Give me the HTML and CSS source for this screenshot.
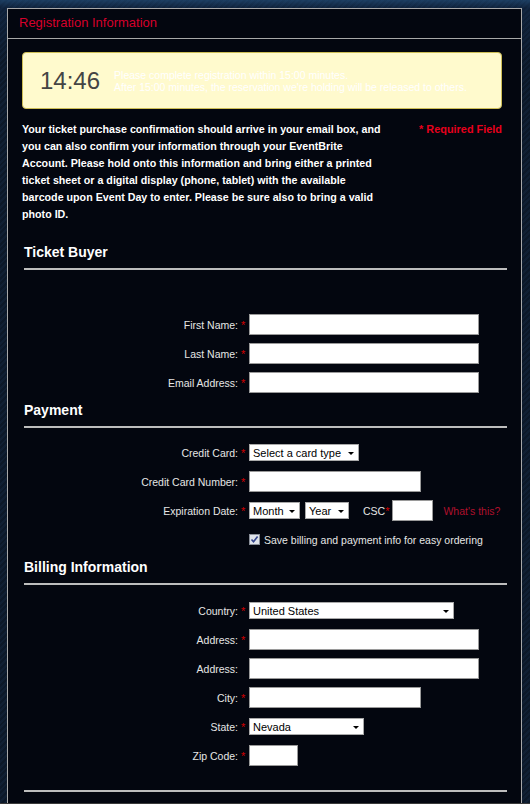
FILE: index.html
```html
<!DOCTYPE html>
<html lang="en">
<head>
<meta charset="utf-8">
<title>Registration Information</title>
<link rel="stylesheet" href="styles.css">
</head>
<body>
<div class="page">
  <div class="panel">
    <div class="panel-header">Registration Information</div>
    <div class="panel-body">
      <div class="timer">
        <div class="timer-clock">14:46</div>
        <div class="timer-msg">Please complete registration within 15:00 minutes.<br>After 15:00 minutes, the reservation we're holding will be released to others.</div>
      </div>

      <div class="intro">
        <p class="intro-text">Your ticket purchase confirmation should arrive in your email box, and<br>you can also confirm your information through your EventBrite<br>Account. Please hold onto this information and bring either a printed<br>ticket sheet or a digital display (phone, tablet) with the available<br>barcode upon Event Day to enter. Please be sure also to bring a valid<br>photo ID.</p>
        <div class="required-note">* Required Field</div>
      </div>

      <section class="section section-first">
        <h2 class="section-title">Ticket Buyer</h2>
        <div class="fields fields-buyer">
          <div class="row"><label class="label">First Name:</label><span class="req">*</span><div class="control"><input class="input w-full" type="text"></div></div>
          <div class="row"><label class="label">Last Name:</label><span class="req">*</span><div class="control"><input class="input w-full" type="text"></div></div>
          <div class="row"><label class="label">Email Address:</label><span class="req">*</span><div class="control"><input class="input w-full" type="text"></div></div>
        </div>
      </section>

      <section class="section">
        <h2 class="section-title">Payment</h2>
        <div class="fields fields-payment">
          <div class="row"><label class="label">Credit Card:</label><span class="req">*</span><div class="control"><div class="select w-card"><span>Select a card type</span><span class="caret"></span></div></div></div>
          <div class="row"><label class="label">Credit Card Number:</label><span class="req">*</span><div class="control"><input class="input w-mid" type="text"></div></div>
          <div class="row"><label class="label">Expiration Date:</label><span class="req">*</span>
            <div class="control">
              <div class="select w-month"><span>Month</span><span class="caret"></span></div>
              <div class="select w-year"><span>Year</span><span class="caret"></span></div>
              <span class="csc-label">CSC</span><span class="req req-inline">*</span>
              <input class="input w-csc" type="text">
              <span class="whats-this">What's this?</span>
            </div>
          </div>
          <div class="row"><span></span><span></span>
            <div class="control">
              <span class="checkbox"><svg width="11" height="11" viewBox="0 0 11 11"><rect x="0.5" y="0.5" width="10" height="10" fill="#dfe3ea" stroke="#8a8f99"/><path d="M2.5 5.5 L4.5 7.8 L8.6 2.6" fill="none" stroke="#34458c" stroke-width="1.6"/></svg></span>
              <span class="check-text">Save billing and payment info for easy ordering</span>
            </div>
          </div>
        </div>
      </section>

      <section class="section">
        <h2 class="section-title">Billing Information</h2>
        <div class="fields fields-billing">
          <div class="row"><label class="label">Country:</label><span class="req">*</span><div class="control"><div class="select w-country"><span>United States</span><span class="caret"></span></div></div></div>
          <div class="row"><label class="label">Address:</label><span class="req">*</span><div class="control"><input class="input w-full" type="text"></div></div>
          <div class="row"><label class="label">Address:</label><span class="req"></span><div class="control"><input class="input w-full" type="text"></div></div>
          <div class="row"><label class="label">City:</label><span class="req">*</span><div class="control"><input class="input w-mid" type="text"></div></div>
          <div class="row"><label class="label">State:</label><span class="req">*</span><div class="control"><div class="select w-state"><span>Nevada</span><span class="caret"></span></div></div></div>
          <div class="row"><label class="label">Zip Code:</label><span class="req">*</span><div class="control"><input class="input w-zip" type="text"></div></div>
        </div>
      </section>

      <div class="end-rule"></div>
    </div>
  </div>
</div>
</body>
</html>
```
FILE: styles.css
```css
html, body {
  margin: 0;
  padding: 0;
}

body {
  width: 530px;
  height: 803px;
  overflow: hidden;
  border-bottom: 1px solid #3a3a3a;
  font-family: "Liberation Sans", Arial, sans-serif;
  background:
    linear-gradient(to bottom, rgba(40, 90, 140, 0.55) 0, rgba(20, 50, 90, 0.35) 8px, rgba(0, 0, 0, 0) 60px),
    repeating-linear-gradient(135deg, #0c1828 0, #0c1828 2px, #101f33 2px, #101f33 4px);
}

.page {
  height: 100%;
  box-sizing: border-box;
  padding: 8px 8px 0 7px;
}

.panel {
  height: 100%;
  box-sizing: border-box;
  border: 1px solid #a8a8a8;
  border-bottom: none;
  background: #03060f;
}

.panel-header {
  height: 30px;
  box-sizing: border-box;
  padding: 5px 0 0 11px;
  font-size: 13px;
  line-height: 17px;
  color: #d6002b;
  border-bottom: 1px solid #a8a8a8;
}

.panel-body {
  padding: 13px 14px 0 14px;
}

.timer {
  margin-right: 5px;
  height: 57px;
  box-sizing: border-box;
  border: 1px solid #cdbd55;
  border-radius: 4px;
  background: #fffacd;
  display: flex;
  align-items: center;
  padding-left: 17px;
}

.timer-clock {
  font-size: 24px;
  line-height: 1;
  color: #444;
  margin-right: 14px;
}

.timer-msg {
  color: #fff;
  font-size: 10.5px;
  line-height: 12px;
}

.intro {
  display: flex;
  justify-content: space-between;
  margin: 12px 5px 0 0;
}

.intro-text {
  margin: 0;
  font-weight: bold;
  font-size: 10.7px;
  line-height: 17px;
  color: #fff;
}

.required-note {
  color: #e8001c;
  font-weight: bold;
  font-size: 10.9px;
  line-height: 17px;
  white-space: nowrap;
}

.section {
  margin: 4px 0 0 2px;
}

.section-first {
  margin-top: 20px;
}

.section-title {
  margin: 0;
  font-size: 14px;
  font-weight: bold;
  line-height: 18px;
  color: #fff;
  padding-bottom: 7px;
  border-bottom: 2px solid #bdbdbd;
}

.fields-buyer {
  padding-top: 40px;
}

.fields-payment {
  padding-top: 10px;
}

.fields-billing {
  padding-top: 11px;
}

.row {
  display: grid;
  grid-template-columns: 214px 11px auto;
  height: 29px;
  align-items: center;
}

.label {
  text-align: right;
  color: #e6e6e6;
  font-size: 10.5px;
  white-space: nowrap;
}

.req {
  color: #d40000;
  font-size: 11px;
  padding-left: 3px;
}

.req-inline {
  padding-left: 0;
  margin-right: 3px;
}

.control {
  display: flex;
  align-items: center;
}

.input {
  height: 21px;
  box-sizing: border-box;
  border: 1px solid #9a9a9a;
  background: #fff;
  margin: 0;
  padding: 0;
}

.w-full { width: 230px; }
.w-mid { width: 172px; }
.w-csc { width: 41px; }
.w-zip { width: 49px; }

.select {
  height: 17px;
  box-sizing: border-box;
  border: 1px solid #a9a9a9;
  background: #fff;
  display: flex;
  align-items: center;
  justify-content: space-between;
  padding: 0 4px 0 3px;
  font-size: 11px;
  color: #000;
  white-space: nowrap;
}

.caret {
  width: 0;
  height: 0;
  border-left: 3px solid transparent;
  border-right: 3px solid transparent;
  border-top: 3px solid #000;
  margin-top: 1px;
}

.w-card { width: 110px; }
.w-month { width: 51px; margin-right: 5px; }
.w-year { width: 44px; margin-right: 14px; }
.w-country { width: 205px; }
.w-state { width: 115px; }

.csc-label {
  color: #e6e6e6;
  font-size: 10.5px;
}

.whats-this {
  margin-left: 10px;
  color: #b0102c;
  font-size: 10.5px;
}

.checkbox {
  display: flex;
  width: 11px;
  height: 11px;
  margin-right: 4px;
}

.check-text {
  color: #e6e6e6;
  font-size: 10.5px;
}

.end-rule {
  margin: 20px 0 0 2px;
  border-top: 2px solid #bdbdbd;
}
```
